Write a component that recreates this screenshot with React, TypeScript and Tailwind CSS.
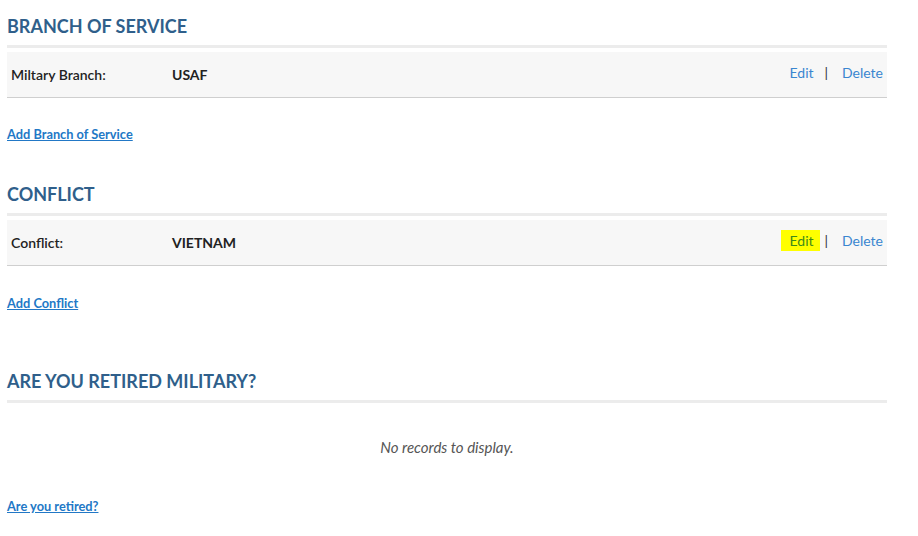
import React from "react";

type Row = { label: string; value: string; highlightEdit?: boolean };

function SectionHeading({ title }: { title: string }) {
    return (
        <div>
            <h2 className="text-[18px] leading-[24px] font-bold text-[#2f5f8b]">{title}</h2>
            <div className="mt-[7px] h-[3px] bg-[#ececec]" />
        </div>
    );
}

function RecordRow({ label, value, highlightEdit }: Row) {
    return (
        <div className="mt-[4px] h-[46px] bg-[#f7f7f7] border-b border-[#cfcfcf] flex items-center pl-[4px] pr-[4px] text-[14px]">
            <span className="w-[161px] font-semibold text-[#222]">{label}</span>
            <span className="font-bold text-[#222]">{value}</span>
            <div className="ml-auto -mt-[4px] flex items-center text-[14px] leading-[21px] text-[#3a86d0]">
                <a href="#" className={highlightEdit ? "inline-block bg-[#ffff00] text-[#3d8a1a] pl-[9px] pr-[6px]" : "inline-block pl-[9px] pr-[6px]"}>
                    Edit
                </a>
                <span className="text-[#333] pl-[5px] pr-[3px]">|</span>
                <a href="#" className="pl-[11px]">Delete</a>
            </div>
        </div>
    );
}

function AddLink({ text, className }: { text: string; className: string }) {
    return (
        <div className={"text-[12.8px] leading-[16px] " + className}>
            <a href="#" className="font-bold text-[#2278c6] underline">{text}</a>
        </div>
    );
}

export default function App() {
    return (
        <div className="w-[918px] h-[536px] bg-white pl-[7px] pr-[31px] pt-[14px]" style={{ fontFamily: "Lato, 'Noto Sans', sans-serif" }}>
            <SectionHeading title="BRANCH OF SERVICE" />
            <RecordRow label="Miltary Branch:" value="USAF" />
            <AddLink text="Add Branch of Service" className="mt-[28px]" />

            <div className="mt-[40px]">
                <SectionHeading title="CONFLICT" />
                <RecordRow label="Conflict:" value="VIETNAM" highlightEdit />
            </div>
            <AddLink text="Add Conflict" className="mt-[29px]" />

            <div className="mt-[58px]">
                <SectionHeading title="ARE YOU RETIRED MILITARY?" />
                <div className="pt-[34px] text-center italic text-[15px] leading-[20px] text-[#555]">No records to display.</div>
            </div>
            <AddLink text="Are you retired?" className="mt-[41px]" />
        </div>
    );
}
